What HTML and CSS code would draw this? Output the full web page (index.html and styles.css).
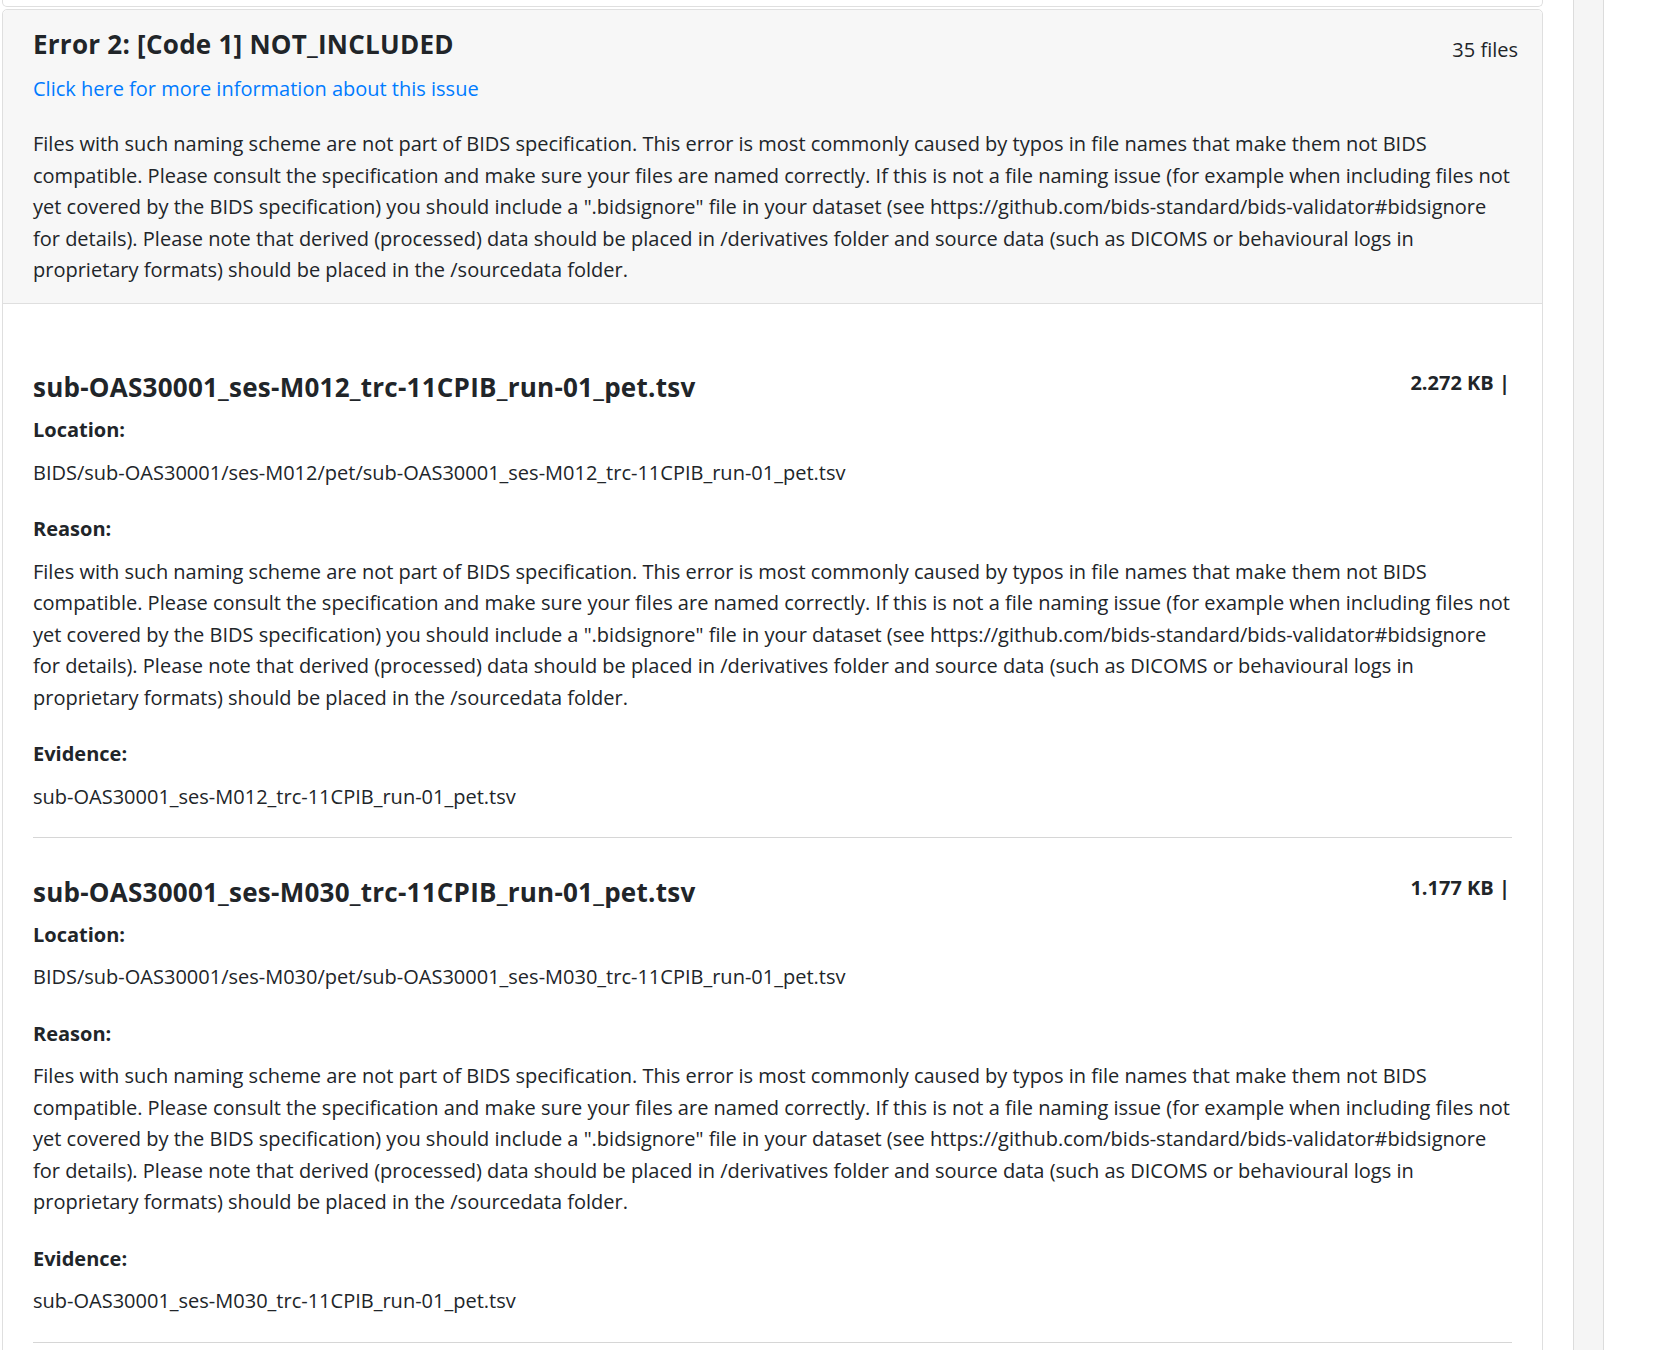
FILE: index.html
```html
<!DOCTYPE html>
<html lang="en">
<head>
<meta charset="utf-8">
<title>BIDS Validator – Error 2</title>
<link rel="stylesheet" href="styles.css">
</head>
<body>
<div class="page">
  <div class="main">
    <div class="card-stub"></div>
    <div class="card">
      <div class="card-header">
        <div class="header-row">
          <h5 class="error-title">Error 2: [Code 1] NOT_INCLUDED</h5>
          <span class="file-count">35 files</span>
        </div>
        <a class="more-link" href="#">Click here for more information about this issue</a>
        <p class="error-desc">Files with such naming scheme are not part of BIDS specification. This error is most commonly caused by typos in file names that make them not BIDS compatible. Please consult the specification and make sure your files are named correctly. If this is not a file naming issue (for example when including files not yet covered by the BIDS specification) you should include a ".bidsignore" file in your dataset (see https://github.com/bids-standard/bids-validator#bidsignore for details). Please note that derived (processed) data should be placed in /derivatives folder and source data (such as DICOMS or behavioural logs in proprietary formats) should be placed in the /sourcedata folder.</p>
      </div>
      <div class="card-body">
        <div class="issue">
          <div class="issue-head">
            <h5 class="file-name">sub-OAS30001_ses-M012_trc-11CPIB_run-01_pet.tsv</h5>
            <span class="file-size">2.272 KB |</span>
          </div>
          <div class="label">Location:</div>
          <p class="value">BIDS/sub-OAS30001/ses-M012/pet/sub-OAS30001_ses-M012_trc-11CPIB_run-01_pet.tsv</p>
          <div class="label">Reason:</div>
          <p class="value">Files with such naming scheme are not part of BIDS specification. This error is most commonly caused by typos in file names that make them not BIDS compatible. Please consult the specification and make sure your files are named correctly. If this is not a file naming issue (for example when including files not yet covered by the BIDS specification) you should include a ".bidsignore" file in your dataset (see https://github.com/bids-standard/bids-validator#bidsignore for details). Please note that derived (processed) data should be placed in /derivatives folder and source data (such as DICOMS or behavioural logs in proprietary formats) should be placed in the /sourcedata folder.</p>
          <div class="label">Evidence:</div>
          <p class="value evidence">sub-OAS30001_ses-M012_trc-11CPIB_run-01_pet.tsv</p>
          <hr class="divider">
        </div>
        <div class="issue">
          <div class="issue-head">
            <h5 class="file-name">sub-OAS30001_ses-M030_trc-11CPIB_run-01_pet.tsv</h5>
            <span class="file-size">1.177 KB |</span>
          </div>
          <div class="label">Location:</div>
          <p class="value">BIDS/sub-OAS30001/ses-M030/pet/sub-OAS30001_ses-M030_trc-11CPIB_run-01_pet.tsv</p>
          <div class="label">Reason:</div>
          <p class="value">Files with such naming scheme are not part of BIDS specification. This error is most commonly caused by typos in file names that make them not BIDS compatible. Please consult the specification and make sure your files are named correctly. If this is not a file naming issue (for example when including files not yet covered by the BIDS specification) you should include a ".bidsignore" file in your dataset (see https://github.com/bids-standard/bids-validator#bidsignore for details). Please note that derived (processed) data should be placed in /derivatives folder and source data (such as DICOMS or behavioural logs in proprietary formats) should be placed in the /sourcedata folder.</p>
          <div class="label">Evidence:</div>
          <p class="value evidence">sub-OAS30001_ses-M030_trc-11CPIB_run-01_pet.tsv</p>
          <hr class="divider">
        </div>
      </div>
    </div>
  </div>
  <div class="side-strip"></div>
</div>
</body>
</html>
```

FILE: styles.css
```css
html, body {
  margin: 0;
  padding: 0;
  background: #ffffff;
}

body {
  font-family: "Open Sans", "Noto Sans", "Liberation Sans", sans-serif;
  font-size: 20px;
  line-height: 31.5px;
  color: #212529;
  overflow: hidden;
}

.page {
  display: flex;
  align-items: stretch;
  min-height: 100vh;
}

.main {
  width: 1541px;
  margin-left: 2px;
  flex: none;
}

.card-stub {
  height: 6px;
  border: 1px solid #dfdfdf;
  border-top: none;
  border-radius: 0 0 5px 5px;
}

.card {
  margin-top: 2px;
  border: 1px solid #dfdfdf;
  border-radius: 5px 5px 0 0;
  background: #ffffff;
}

.card-header {
  background: #f7f7f7;
  border-bottom: 1px solid #dfdfdf;
  border-radius: 5px 5px 0 0;
  padding: 19px 24px 17px 30px;
}

.header-row {
  display: flex;
  justify-content: space-between;
  align-items: flex-start;
  margin-bottom: 8px;
}

.error-title,
.file-name {
  margin: 0;
  font-size: 26px;
  font-weight: 700;
  line-height: 31.5px;
  letter-spacing: 0.25px;
}

.file-count {
  padding-top: 4.5px;
}

.more-link {
  display: block;
  color: #007bff;
  text-decoration: none;
}

.error-desc {
  margin: 23.5px 0 0;
}

.card-body {
  padding: 30px 30px 30px 30px;
}

.issue {
  padding-top: 38.6px;
}

.issue-head {
  display: flex;
  justify-content: space-between;
  align-items: flex-start;
  margin-bottom: 10.5px;
}

.file-size {
  font-weight: 700;
  margin-top: -5px;
  padding-right: 2px;
}

.label {
  font-weight: 700;
  margin-bottom: 11px;
}

.value {
  margin: 0 0 25px;
}

.value.evidence {
  margin-bottom: 25px;
}

.divider {
  margin: 0;
  border: 0;
  border-top: 1px solid #d6d6d6;
}

.side-strip {
  flex: none;
  width: 29px;
  margin-left: 30px;
  background: #f5f5f5;
  border-left: 1px solid #dcdcdc;
  border-right: 1px solid #dcdcdc;
}
```
